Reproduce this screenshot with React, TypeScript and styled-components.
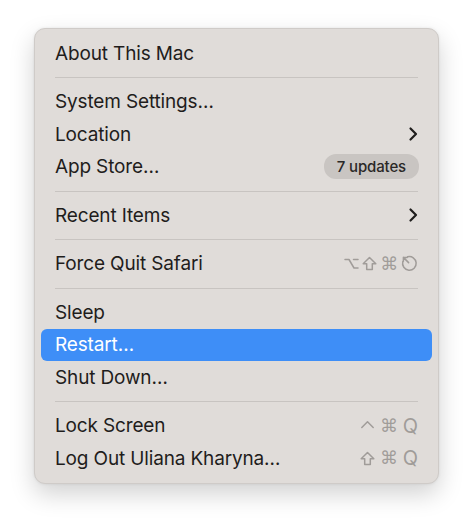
import styled, { createGlobalStyle } from 'styled-components';

const GlobalStyle = createGlobalStyle`
  html, body {
    margin: 0;
    padding: 0;
    background: #ffffff;
  }
  body {
    font-family: Inter, 'Liberation Sans', sans-serif;
  }
`;

const Page = styled.div`
  width: 474px;
  height: 522px;
  padding: 28px 0 0 34px;
  box-sizing: border-box;
`;

const Menu = styled.div`
  width: 405px;
  box-sizing: border-box;
  padding: 8px 6px 8px;
  background: #e0dcd9;
  border: 1px solid #cfcbc8;
  border-radius: 11px;
  box-shadow: 0 10px 24px rgba(0, 0, 0, 0.18), 0 0 3px rgba(0, 0, 0, 0.08);
  display: flex;
  flex-direction: column;
`;

const Item = styled.div<{ $active?: boolean }>`
  height: 32.5px;
  display: flex;
  align-items: center;
  justify-content: space-between;
  padding: 0 14px 0 14px;
  border-radius: 6px;
  font-size: 19px;
  letter-spacing: -0.15px;
  color: ${p => (p.$active ? '#ffffff' : '#1f1d1c')};
  background: ${p => (p.$active ? '#3e8ef7' : 'transparent')};
`;

const Separator = styled.div`
  height: 16px;
  display: flex;
  align-items: center;
  padding: 0 14px;

  &::after {
    content: '';
    flex: 1;
    height: 1px;
    background: #c8c4c1;
  }
`;

const Badge = styled.span`
  background: #c9c5c2;
  color: #2a2827;
  font-size: 15px;
  font-weight: 500;
  padding: 3px 13px;
  border-radius: 12px;
  margin-right: -1px;
`;

const Shortcut = styled.span<{ $tight?: boolean }>`
  display: flex;
  align-items: center;
  gap: ${p => (p.$tight ? '3px' : '5px')};
  color: #a09c99;

  svg {
    display: block;
  }
`;

const Key = styled.span<{ $letter?: boolean }>`
  font-family: ${p => (p.$letter ? 'Inter' : "'DejaVu Sans'")}, sans-serif;
  font-size: ${p => (p.$letter ? '20px' : '18px')};
  line-height: 1;
`;

const Chevron = () => (
  <svg width="10" height="16" viewBox="0 0 10 16">
    <path d="M2.5 2.5 L8 8 L2.5 13.5" fill="none" stroke="#1f1d1c" strokeWidth="2.2" strokeLinecap="round" strokeLinejoin="round" />
  </svg>
);

const GRAY = '#a09c99';

const Glyph = ({ d }: { d: string }) => (
  <svg width="15" height="15" viewBox="0 0 15 15">
    <path d={d} fill="none" stroke={GRAY} strokeWidth="1.5" strokeLinecap="round" strokeLinejoin="round" />
  </svg>
);

const SHIFT = 'M7.5 1.5 L13.8 7.8 L10.3 7.8 L10.3 13.5 L4.7 13.5 L4.7 7.8 L1.2 7.8 Z';
const CONTROL = 'M1.8 9.5 L7.5 3.8 L13.2 9.5';
const OPTION = 'M1 3.5 L5 3.5 L10 12 L14 12 M9.5 3.5 L14 3.5';

const EscapeIcon = () => (
  <svg width="17" height="17" viewBox="0 0 17 17">
    <path d="M6.6 1.8 A6.8 6.8 0 1 1 1.8 6.6" fill="none" stroke={GRAY} strokeWidth="1.5" strokeLinecap="round" />
    <path d="M2.4 2.4 L7.6 7.6 M2.4 2.4 L2.4 6.2 M2.4 2.4 L6.2 2.4" fill="none" stroke={GRAY} strokeWidth="1.5" strokeLinecap="round" strokeLinejoin="round" />
  </svg>
);

const App = () => (
  <Page>
    <GlobalStyle />
    <Menu>
      <Item>About This Mac</Item>
      <Separator />
      <Item>System Settings…</Item>
      <Item>
        Location
        <Chevron />
      </Item>
      <Item>
        App Store…
        <Badge>7 updates</Badge>
      </Item>
      <Separator />
      <Item>
        Recent Items
        <Chevron />
      </Item>
      <Separator />
      <Item>
        Force Quit Safari
        <Shortcut $tight>
          <Glyph d={OPTION} />
          <Glyph d={SHIFT} />
          <Key>⌘</Key>
          <EscapeIcon />
        </Shortcut>
      </Item>
      <Separator />
      <Item>Sleep</Item>
      <Item $active>Restart…</Item>
      <Item>Shut Down…</Item>
      <Separator />
      <Item>
        Lock Screen
        <Shortcut>
          <Glyph d={CONTROL} />
          <Key>⌘</Key>
          <Key $letter>Q</Key>
        </Shortcut>
      </Item>
      <Item>
        Log Out Uliana Kharyna…
        <Shortcut>
          <Glyph d={SHIFT} />
          <Key>⌘</Key>
          <Key $letter>Q</Key>
        </Shortcut>
      </Item>
    </Menu>
  </Page>
);

export default App;
